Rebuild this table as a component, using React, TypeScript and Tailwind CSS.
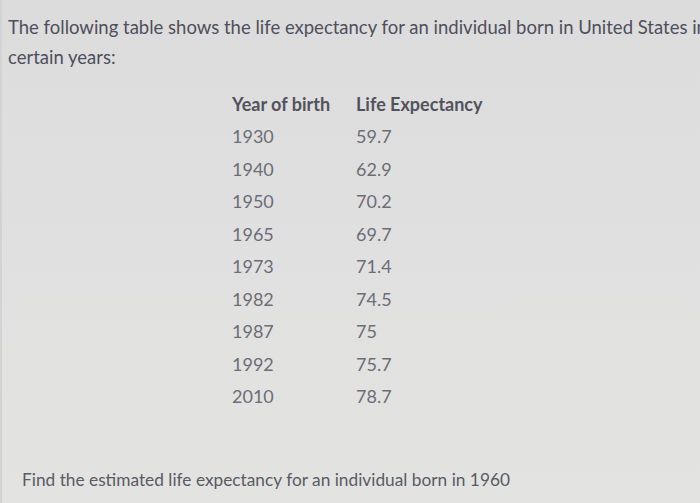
const rows: [string, string][] = [
  ["1930", "59.7"],
  ["1940", "62.9"],
  ["1950", "70.2"],
  ["1965", "69.7"],
  ["1973", "71.4"],
  ["1982", "74.5"],
  ["1987", "75"],
  ["1992", "75.7"],
  ["2010", "78.7"],
];

export default function App() {
  return (
    <div
      className="w-[700px] h-[503px] overflow-hidden border-l-2 border-[#d3d3d5] bg-gradient-to-b from-[#dcdcdd] via-[#e0e0e0] to-[#e3e4e1] text-[#4f4f5b]"
      style={{ fontFamily: "Lato, 'Open Sans', sans-serif" }}
    >
      {/* Question text (runs past the right edge, as in the photo) */}
      <p className="pt-3 pl-[6px] text-[18.5px] leading-[30px] whitespace-nowrap">
        The following table shows the life expectancy for an individual born in United States in
        <br />
        certain years:
      </p>

      {/* Data table */}
      <table className="mt-4 ml-[230px] border-collapse text-[18px]">
        <thead>
          <tr className="h-[32.5px] text-left text-[#52525d]">
            <th className="w-[124px] p-0 font-bold">Year of birth</th>
            <th className="p-0 font-bold">Life Expectancy</th>
          </tr>
        </thead>
        <tbody className="text-[#6d6d76]">
          {rows.map(([year, life]) => (
            <tr key={year} className="h-[32.5px]">
              <td className="p-0">{year}</td>
              <td className="p-0">{life}</td>
            </tr>
          ))}
        </tbody>
      </table>

      <p className="mt-[52px] pl-5 text-[17.3px] leading-[30px] text-[#5a5a64] whitespace-nowrap">
        Find the estimated life expectancy for an individual born in 1960
      </p>
    </div>
  );
}
